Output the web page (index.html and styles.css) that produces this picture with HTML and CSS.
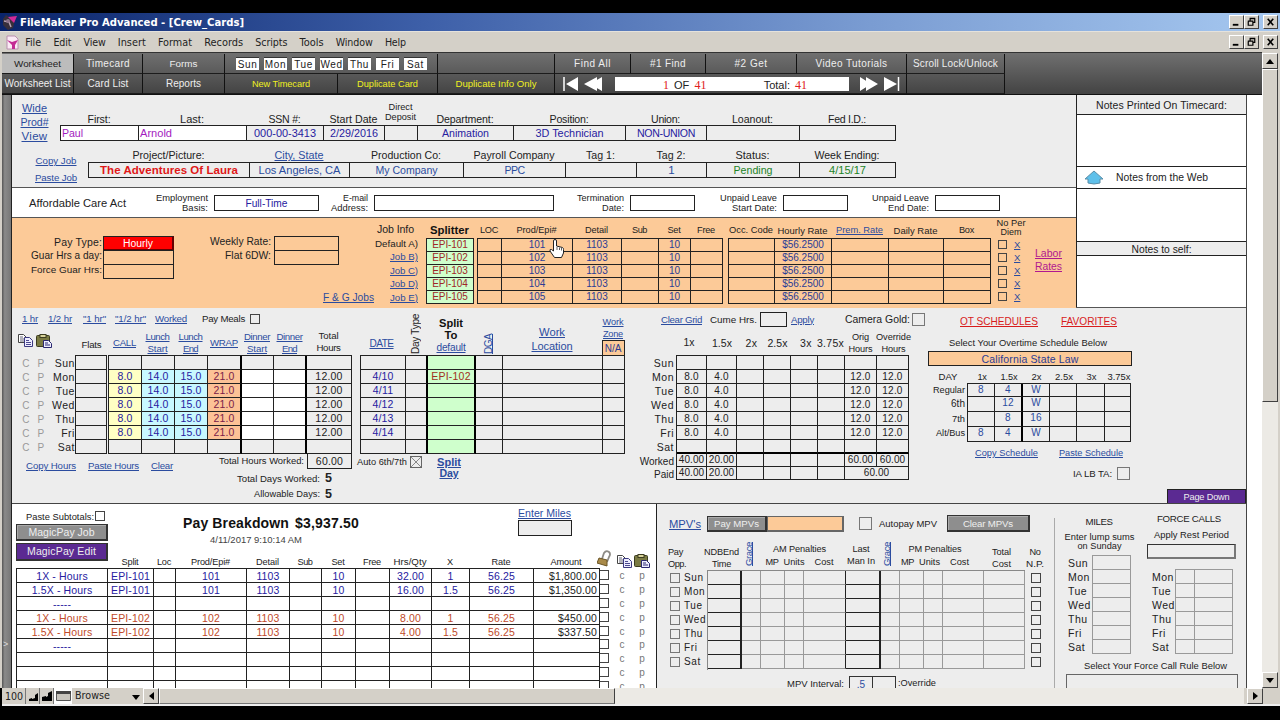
FILE: index.html
```html
<!DOCTYPE html>
<html lang="en">
<head>
<meta charset="utf-8">
<title>FileMaker Pro Advanced - [Crew_Cards]</title>
<link rel="stylesheet" href="styles.css">
</head>
<body>
<svg class="defs" width="0" height="0">
  <symbol id="copy" viewBox="0 0 15 13">
    <path d="M.5.5h5l3 3v5h-8z" fill="#fff" stroke="#444"/><path d="M2 3h3M2 5h5M2 7h5" stroke="#667"/>
    <path d="M6.500 3.500h5l3 3v6h-8z" fill="#eef" stroke="#3b3880"/><path d="M8 6.500h3M8 8.500h5M8 10.500h5" stroke="#4b4890"/>
  </symbol>
  <symbol id="paste" viewBox="0 0 16 14">
    <rect x=".5" y="1.500" width="13" height="11" rx="1" fill="#7a7a42" stroke="#3c3c20"/><rect x="4" y=".5" width="6" height="3" fill="#d8d39a" stroke="#3c3c20"/>
    <path d="M7.500 6.500h5l3 3v4h-8z" fill="#eef" stroke="#2b2870"/><path d="M9 9h3M9 11h5" stroke="#2b2870"/>
  </symbol>
  <symbol id="min" viewBox="0 0 14 12"><path d="M3 9h6" stroke="#000" stroke-width="2"/></symbol>
  <symbol id="restore" viewBox="0 0 14 12"><path d="M5.500 5V2.500h5v4H8M5 2h6M3 5h6M3.500 5.500v4h5v-4" fill="none" stroke="#000" stroke-width="1.300"/></symbol>
  <symbol id="close" viewBox="0 0 14 12"><path d="M4 2.500l6 7M10 2.500l-6 7" stroke="#000" stroke-width="1.700"/></symbol>
</svg>

<header class="titlebar">
  <svg width="17" height="17" viewBox="0 0 17 17"><path d="M2 5l3-4 3 2 7-1-3 12-5 2-5-5z" fill="#372f3b"/><path d="M7 3l9-1-3 7z" fill="#d02a9a"/><path d="M3 7l5 1 2 5" fill="none" stroke="#b9a3b4" stroke-width="1.500"/><circle cx="7" cy="7" r="2" fill="#8c7288"/></svg>
  <span data-w="224">FileMaker Pro Advanced - [Crew_Cards]</span>
  <div class="winbtns"><i><svg><use href="#min"/></svg></i><i><svg><use href="#restore"/></svg></i><i><svg><use href="#close"/></svg></i></div>
</header>
<nav class="menubar">
  <svg width="13" height="15" viewBox="0 0 13 15"><path d="M1 1h8l3 3v10H1z" fill="#fbeaf5" stroke="#b98fb0"/><path d="M1 5l5 2 6-2-3 5v4H6v-4z" fill="#c42a94"/></svg>
  <span data-w="16">File</span><span data-w="18">Edit</span><span data-w="22">View</span><span data-w="28">Insert</span><span data-w="34">Format</span><span data-w="39">Records</span><span data-w="32">Scripts</span><span data-w="24">Tools</span><span data-w="37">Window</span><span data-w="21">Help</span>
  <div class="winbtns"><i><svg><use href="#min"/></svg></i><i><svg><use href="#restore"/></svg></i><i><svg><use href="#close"/></svg></i></div>
</nav>

<div class="workspace">
<div class="document">
  <div class="toolbar">
    <div class="on"><span data-w="47">Worksheet</span></div><div><span data-w="44">Timecard</span></div><div><span data-w="28">Forms</span></div>
    <div class="days"><b>Sun</b><b>Mon</b><b>Tue</b><b>Wed</b><b>Thu</b><b>Fri</b><b>Sat</b></div>
    <div></div><div><span data-w="37">Find All</span></div><div><span data-w="36">#1 Find</span></div><div><span data-w="33">#2 Get</span></div><div><span data-w="72">Video Tutorials</span></div><div><span data-w="85">Scroll Lock/Unlock</span></div><div class="blank"></div>
    <div><span data-w="66">Worksheet List</span></div><div><span data-w="41">Card List</span></div><div><span data-w="35">Reports</span></div>
    <div class="yellow"><span data-w="58">New Timecard</span></div><div class="yellow"><span data-w="61">Duplicate Card</span></div><div class="yellow"><span data-w="81">Duplicate Info Only</span></div>
    <div class="pager">
      <svg width="42" height="16" viewBox="0 0 42 16"><path d="M1 1v14" stroke="#fff" stroke-width="1.500"/><path d="M15 1v14L3 8zM34 1v14L21 8zM39 1v14L27 8z" fill="#fff"/></svg>
      <div class="count"><span class="at"><em>1</em> OF <em>41</em></span><span>Total: <em>41</em></span></div>
      <svg width="42" height="16" viewBox="0 0 42 16"><path d="M1 1v14l11-7zM7 1v14l12-7zM25 1v14l13-7z" fill="#fff"/><path d="M39.500 1v14" stroke="#fff" stroke-width="1.500"/></svg>
    </div>
    <div></div><div class="blank"></div>
  </div>

  <div class="body">
  <div class="gutter">&gt;</div>
  <div class="sheet">
    <div class="top">
      <div class="top-left">
        <section class="person">
          <div class="side"><a data-w="25">Wide</a><a data-w="28">Prod#</a><a data-w="26">View</a></div>
          <div>
            <div class="heads cols-person"><span data-w="23">First:</span><span data-w="24">Last:</span><span data-w="32">SSN #:</span><span data-w="48">Start Date</span><div class="small"><span data-w="24">Direct</span><span data-w="31">Deposit</span></div><span data-w="57">Department:</span><span data-w="39">Position:</span><span data-w="29">Union:</span><span data-w="41">Loanout:</span><span data-w="38">Fed I.D.:</span></div>
            <div class="grid cols-person"><span class="w l pink"><q data-w="21">Paul</q></span><span class="w l pink"><q data-w="32">Arnold</q></span><span><q data-w="62">000-00-3413</q></span><span><q data-w="48">2/29/2016</q></span><span></span><span><q data-w="47">Animation</q></span><span><q data-w="68">3D Technician</q></span><span><q data-w="58">NON-UNION</q></span><span></span><span></span></div>
          </div>
        </section>
        <section class="project">
          <div class="side"><a data-w="41">Copy Job</a><a data-w="42">Paste Job</a></div>
          <div>
            <div class="heads cols-project"><span data-w="72">Project/Picture:</span><a data-w="49">City, State</a><span data-w="70">Production Co:</span><span data-w="81">Payroll Company</span><span data-w="29">Tag 1:</span><span data-w="29">Tag 2:</span><span data-w="34">Status:</span><span data-w="65">Week Ending:</span></div>
            <div class="grid cols-project"><span class="red"><q data-w="138">The Adventures Of Laura</q></span><span><q data-w="82">Los Angeles, CA</q></span><span><q data-w="62">My Company</q></span><span><q data-w="20">PPC</q></span><span></span><span>1</span><span class="green"><q data-w="39">Pending</q></span><span class="green"><q data-w="37">4/15/17</q></span></div>
          </div>
        </section>
        <section class="aca">
          <strong data-w="97">Affordable Care Act</strong>
          <div class="lbl"><span data-w="52">Employment</span><span data-w="26">Basis:</span></div><div class="field"><span data-w="42">Full-Time</span></div>
          <div class="lbl"><span data-w="25">E-mail</span><span data-w="37">Address:</span></div><div class="field"></div>
          <div class="lbl"><span data-w="47">Termination</span><span data-w="22">Date:</span></div><div class="field"></div>
          <div class="lbl"><span data-w="57">Unpaid Leave</span><span data-w="45">Start Date:</span></div><div class="field"></div>
          <div class="lbl"><span data-w="57">Unpaid Leave</span><span data-w="41">End Date:</span></div><div class="field"></div>
        </section>
        <section class="rates">
          <div class="pay-labels"><span data-w="48">Pay Type:</span><span data-w="71">Guar Hrs a day:</span><span data-w="71">Force Guar Hrs:</span></div>
          <div class="pay-fields"><div class="hot"><span data-w="30">Hourly</span></div><div></div><div></div></div>
          <div class="week-labels"><span data-w="61">Weekly Rate:</span><span data-w="46">Flat 6DW:</span></div>
          <div class="pay-fields week"><div></div><div></div></div>
          <div class="job-labels"><span class="big" data-w="37">Job Info</span><span data-w="43">Default A)</span><a data-w="28">Job B)</a><a data-w="28">Job C)</a><a data-w="28">Job D)</a><div><a data-w="51">F &amp; G Jobs</a><a data-w="28">Job E)</a></div></div>
          <div class="job-grid splitter"><div class="heads cols-split"><b data-w="39">Splitter</b></div><div class="grid cols-split" id="splitter"></div></div>
          <div class="job-grid"><div class="heads cols-job"><span data-w="18">LOC</span><span data-w="40">Prod/Epi#</span><span data-w="23">Detail</span><span data-w="15">Sub</span><span data-w="13">Set</span><span data-w="18">Free</span></div><div class="grid cols-job" id="jobs"></div></div>
          <div class="job-grid money"><div class="heads cols-rate"><span data-w="44">Occ. Code</span><span data-w="50">Hourly Rate</span><a data-w="47">Prem. Rate</a><span data-w="44">Daily Rate</span><span data-w="15">Box</span></div><div class="grid cols-rate" id="rates"></div></div>
          <div class="diem"><div class="two"><span data-w="29">No Per</span><span data-w="21">Diem</span></div><div id="diem"></div></div>
          <div class="labor"><a data-w="27">Labor</a><a data-w="27">Rates</a></div>
        </section>
      </div>
      <aside class="notes">
        <h4><span data-w="131">Notes Printed On Timecard:</span></h4><div class="note a"></div>
        <div class="web"><svg width="20" height="15" viewBox="0 0 20 15"><path d="M10 1l9 8h-3v4q-6 2-12 0V9H1z" fill="#5fc0ea" stroke="#5b8ea8"/></svg><span data-w="92">Notes from the Web</span></div><div class="note b"></div>
        <h4 class="self"><span data-w="60">Notes to self:</span></h4><div class="note c"></div>
      </aside>
    </div>

    <section class="time">
      <div class="hours">
        <div class="links"><a data-w="16">1 hr</a><a data-w="24">1/2 hr</a><a data-w="23">"1 hr"</a><a data-w="31">"1/2 hr"</a><a data-w="32">Worked</a><span data-w="43">Pay Meals</span><i class="box"></i></div>
        <div class="heads cols-hours"><div class="tools"><svg width="15" height="13"><use href="#copy"/></svg><svg width="16" height="14"><use href="#paste"/></svg></div><span data-w="20">Flats</span><a data-w="23">CALL</a><div class="two"><a data-w="24">Lunch</a><a data-w="20">Start</a></div><div class="two"><a data-w="24">Lunch</a><a data-w="15">End</a></div><a data-w="28">WRAP</a><div class="two"><a data-w="26">Dinner</a><a data-w="20">Start</a></div><div class="two"><a data-w="26">Dinner</a><a data-w="15">End</a></div><div class="two tot"><span data-w="20">Total</span><span data-w="24">Hours</span></div></div>
        <div class="rows"><div class="daycol cols-cp" id="cp"></div><div class="grid flats" id="flats"></div><div class="grid cols-punch" id="punch"></div></div>
        <div class="foot"><div class="flinks"><a data-w="50">Copy Hours</a><a data-w="51">Paste Hours</a><a data-w="22">Clear</a></div><span data-w="85">Total Hours Worked:</span><div class="sum">60.00</div></div>
        <div class="days-sum"><span data-w="83">Total Days Worked:</span><b>5</b><span data-w="66">Allowable Days:</span><b>5</b></div>
      </div>
      <div class="splits">
        <div class="heads cols-place"><a data-w="24">DATE</a><span class="vert" data-w="40">Day Type</span><div class="three"><b data-w="24">Split</b><b data-w="13">To</b><a data-w="29">default</a></div><a class="vert" data-w="20">DGA</a><div class="loc"><a data-w="26">Work</a><a data-w="41">Location</a></div><div class="zone"><a data-w="21">Work</a><a data-w="20">Zone</a><em>N/A</em></div></div>
        <div class="grid cols-place" id="place"></div>
        <div class="foot2"><span data-w="50">Auto 6th/7th</span><i class="box x"></i><div><a data-w="24">Split</a><a data-w="19">Day</a></div></div>
      </div>
      <div class="ot-hours">
        <div class="links"><a data-w="41">Clear Grid</a><span data-w="47">Cume Hrs.</span><div class="field"></div><a data-w="23">Apply</a><span class="gold" data-w="65">Camera Gold:</span><i class="box"></i></div>
        <div class="heads cols-ot"><span></span><span data-w="11">1x</span><span data-w="20">1.5x</span><span data-w="12">2x</span><span data-w="20">2.5x</span><span data-w="12">3x</span><span data-w="27">3.75x</span><div class="two"><span data-w="17">Orig</span><span data-w="24">Hours</span></div><div class="two"><span data-w="35">Override</span><span data-w="24">Hours</span></div></div>
        <div class="rows"><div class="daycol names" id="otdays"></div><div class="grid cols-otgrid" id="ot"></div></div>
      </div>
      <div class="schedules">
        <div class="sched-links"><a data-w="78">OT SCHEDULES</a><a data-w="56">FAVORITES</a></div>
        <div class="pick"><span data-w="158">Select Your Overtime Schedule Below</span></div>
        <div class="law"><span data-w="97">California State Law</span></div>
        <div class="heads cols-law"><span data-w="19">DAY</span><span data-w="9">1x</span><span data-w="17">1.5x</span><span data-w="10">2x</span><span data-w="18">2.5x</span><span data-w="10">3x</span><span data-w="23">3.75x</span></div>
        <div class="rows"><div class="lawnames"><span data-w="32">Regular</span><span data-w="14">6th</span><span data-w="13">7th</span><span data-w="29">Alt/Bus</span></div><div class="grid cols-lawgrid" id="law"></div></div>
        <div class="law-links"><a data-w="63">Copy Schedule</a><a data-w="64">Paste Schedule</a></div>
        <div class="ialb"><span data-w="39">IA LB TA:</span><i class="box"></i></div>
        <div class="pagedown"><span data-w="46">Page Down</span></div>
      </div>
    </section>

    <div class="bottom">
      <section class="pay">
        <div class="pay-top">
          <div class="actions"><div class="sub"><span data-w="68">Paste Subtotals:</span><i class="box"></i></div><button><span data-w="66">MagicPay Job</span></button><button class="purple"><span data-w="69">MagicPay Edit</span></button></div>
          <div class="title"><h2><span data-w="106">Pay Breakdown</span><span data-w="64">$3,937.50</span></h2><time data-w="92">4/11/2017 9:10:14 AM</time></div>
          <div class="miles"><a data-w="53">Enter Miles</a><div class="field"></div></div>
        </div>
        <div class="heads cols-pay"><span></span><span data-w="17">Split</span><span data-w="14">Loc</span><span data-w="39">Prod/Epi#</span><span data-w="23">Detail</span><span data-w="15">Sub</span><span data-w="13">Set</span><span data-w="18">Free</span><span data-w="33">Hrs/Qty</span><span data-w="6">X</span><span data-w="19">Rate</span><span data-w="31">Amount</span>
          <svg width="14" height="17" viewBox="0 0 14 17"><path d="M5 9L7 3Q9 0 12 2q2 2 0 5l-2 5" fill="none" stroke="#8d8b86" stroke-width="1.800"/><path d="M2 8l8 2v6L0 13z" fill="#a98a48" stroke="#6b5526"/></svg>
          <svg width="15" height="13"><use href="#copy"/></svg><svg width="16" height="14"><use href="#paste"/></svg></div>
        <div class="rows"><div class="grid cols-pay" id="pay"></div><div class="paychecks" id="paychecks"></div></div>
      </section>
      <section class="mpv">
        <div class="mpv-top"><a data-w="32">MPV's</a><button><span data-w="45">Pay MPVs</span></button><div class="orange"></div><i class="box"></i><span data-w="58">Autopay MPV</span><button class="clear"><span data-w="50">Clear MPVs</span></button></div>
        <div class="heads cols-mpvhead"><div class="two l"><span data-w="15">Pay</span><span data-w="18">Opp.</span></div><div class="two"><span data-w="35">NDBEnd</span><span data-w="19">Time</span></div><a class="vert" data-w="24">Grace</a><div class="pen"><span data-w="53">AM Penalties</span><div><span data-w="13">MP</span><span data-w="21">Units</span><span data-w="19">Cost</span></div></div><div class="two last"><span data-w="17">Last</span><span data-w="28">Man In</span></div><a class="vert" data-w="24">Grace</a><div class="pen"><span data-w="53">PM Penalties</span><div><span data-w="13">MP</span><span data-w="21">Units</span><span data-w="19">Cost</span></div></div><div class="two"><span data-w="19">Total</span><span data-w="19">Cost</span></div><div class="two"><span data-w="11">No</span><span data-w="18">N.P.</span></div></div>
        <div class="rows"><div class="opp" id="opp"></div><div class="grid cols-mpv" id="mpv"></div><div class="nonp" id="nonp"></div></div>
        <div class="interval"><span data-w="57">MPV Interval:</span><div>.5</div><div></div><span data-w="38">:Override</span></div>
      </section>
      <section class="extras">
        <div class="ex-miles"><h5><span data-w="27">MILES</span></h5><div class="two"><span data-w="70">Enter lump sums</span><span data-w="44">on Sunday</span></div><div class="rows"><div class="daycol names" id="mdays"></div><div class="grid pale cols-m" id="mgrid"></div></div></div>
        <div class="ex-force"><h5><span data-w="64">FORCE CALLS</span></h5><p><span data-w="75">Apply Rest Period</span></p><div class="rest"></div><div class="rows"><div class="daycol names" id="fdays"></div><div class="grid pale cols-f" id="fgrid"></div></div></div>
        <div class="rule"><span data-w="143">Select Your Force Call Rule Below</span><div></div></div>
      </section>
    </div>
  </div>
  </div>
</div>
<div class="vscroll"><i class="up"><svg width="8" height="5"><path d="M0 5h8L4 0z"/></svg></i><div class="thumb"></div><i class="down"><svg width="8" height="5"><path d="M0 0h8L4 5z"/></svg></i></div>
</div>

<footer class="status">
  <span class="zoom" data-w="18">100</span>
  <i class="z"><svg width="10" height="8"><path d="M0 8v-2l3-1v1l3-1V2l3-2v8z"/></svg></i><i class="z"><svg width="11" height="10"><path d="M0 10V6l4-1v1l2-1V2l4-2v10z"/></svg></i><i class="z w"><svg width="15" height="10"><path d="M.5.500h14v9H.5z" fill="#c8c5be" stroke="#555"/><path d="M0 1.500h15" stroke="#444" stroke-width="3"/></svg></i>
  <span class="mode" data-w="35">Browse</span><svg class="drop" width="8" height="5"><path d="M0 0h8L4 5z"/></svg>
  <i class="arrow"><svg width="5" height="8"><path d="M5 0v8L0 4z"/></svg></i><div class="hthumb"></div><div class="htrack"></div><i class="arrow r"><svg width="5" height="8"><path d="M0 0v8l5-4z"/></svg></i><div class="corner"></div>
</footer>

<svg class="hand" width="15" height="19" viewBox="0 0 15 19"><path d="M4.500 12V2q0-1.500 1.500-1.500T7.500 2v5l6 1.500q1 .5 1 2V14l-2 4.500h-7L1 12q-.5-2 1.500-1.500z" fill="#fff" stroke="#222"/><path d="M8 8v3M10.500 8.500V11M12.500 9v2.500" stroke="#333" stroke-width=".8"/></svg>
<script src="app.js"></script>
</body>
</html>
```

FILE: app.js
```js
const DAYS = ['Sun', 'Mon', 'Tue', 'Wed', 'Thu', 'Fri', 'Sat'];
const worked = r => r > 0 && r < 6;

// Adds one cell per value; classOf(row, col) names the cell's extra classes.
function fill(id, rows, classOf = () => '') {
  const el = document.getElementById(id);
  rows.forEach((row, r) => row.forEach((text, c) => {
    const cell = document.createElement('span');
    cell.className = classOf(r, c);
    if (text === '[]') {
      const box = document.createElement('i');
      box.className = 'box';
      cell.append(box);
    } else {
      cell.textContent = text;
    }
    el.append(cell);
  }));
}
const blank = (rows, cols) => Array.from({ length: rows }, () => Array(cols).fill(''));

const jobs = ['101', '102', '103', '104', '105'];
fill('splitter', jobs.map(j => ['EPI-' + j]));
fill('jobs', jobs.map(j => ['', j, '1103', '', '10', '']));
fill('rates', jobs.map(() => ['', '$56.2500', '', '', '']));
fill('diem', jobs.map(() => ['[]', 'X']), (r, c) => (c ? 'link' : ''));

fill('cp', DAYS.map(d => ['C', 'P', d]), (r, c) => (c < 2 ? 'faint' : 'name'));
fill('flats', blank(7, 1));
const tint = ['yellow', 'cyan', 'cyan', 'peach', 'white', 'white', 'plain'];
fill('punch', DAYS.map((d, r) => worked(r) ? ['8.0', '14.0', '15.0', '21.0', '', '', '12.00'] : Array(7).fill('')),
  (r, c) => (worked(r) ? tint[c] : '') + (c === 3 || c === 5 ? ' thick' : ''));
fill('place', DAYS.map((d, r) => [worked(r) ? '4/' + (9 + r) : '', '', r === 1 ? 'EPI-102' : '', '', '', '']),
  (r, c) => (c === 2 ? 'mint' : c === 1 ? 'thick' : ''));
fill('otdays', [...DAYS, 'Worked', 'Paid'].map(d => [d]));
fill('ot', [
  ...DAYS.map((d, r) => worked(r) ? ['8.0', '4.0', '', '', '', '', '12.0', '12.0'] : Array(8).fill('')),
  ['40.00', '20.00', '', '', '', '', '60.00', '60.00'],
  ['40.00', '20.00', '', '', '', '', '60.00'],
], (r, c) => (r > 6 ? 'total' : '') + (r === 6 ? ' under' : '') + (r === 8 && c === 6 ? ' wide' : ''));
fill('law', [['8', '4', 'W', '', '', ''], ['', '12', 'W', '', '', ''], ['', '8', '16', '', '', ''], ['8', '4', 'W', '', '', '']],
  (r, c) => (c === 1 ? 'thick' : ''));

const line = (kind, job, qty, x, amount) => [kind, 'EPI-' + job, '', job, '1103', '', '10', '', qty, x, '56.25', amount];
const rule = ['-----', ...Array(11).fill('')];
fill('pay', [
  line('1X - Hours', '101', '32.00', '1', '$1,800.00'),
  line('1.5X - Hours', '101', '16.00', '1.5', '$1,350.00'),
  rule,
  line('1X - Hours', '102', '8.00', '1', '$450.00'),
  line('1.5X - Hours', '102', '4.00', '1.5', '$337.50'),
  rule,
  ...blank(3, 12),
], (r, c) => (c === 11 ? 'amount' : r === 3 || r === 4 ? 'rust' : ''));
fill('paychecks', Array.from({ length: 9 }, () => ['[]', 'c', 'p']));

fill('opp', DAYS.map(d => ['[]', d]));
fill('mpv', blank(7, 10), (r, c) => (c === 0 || c === 5 ? 'dark' : c === 4 ? 'edge' : ''));
fill('nonp', DAYS.map(() => ['[]']));
fill('mdays', DAYS.map(d => [d]));
fill('mgrid', blank(7, 1));
fill('fdays', DAYS.slice(1).map(d => [d]));
fill('fgrid', blank(6, 2));

// Fits each label to the width of its text object: a small reduction in size
// where the text is too long, then tracking for the rest.
document.querySelectorAll('[data-w]').forEach(el => {
  const measure = () => {
    const range = document.createRange();
    range.selectNodeContents(el);
    const rect = range.getBoundingClientRect();
    return el.classList.contains('vert') ? rect.height : rect.width;
  };
  const target = Number(el.dataset.w);
  if (measure() > target) {
    const size = parseFloat(getComputedStyle(el).fontSize);
    el.style.fontSize = size * Math.max(target / measure(), 0.92) + 'px';
  }
  el.style.letterSpacing = (target - measure()) / el.textContent.length + 'px';
});
```

FILE: styles.css
```css
* { box-sizing: border-box; }
body { margin: 0; width: 1280px; height: 720px; overflow: hidden; background: #000; padding-top: 13px; font: 10.5px/14px "Liberation Sans", Arial, sans-serif; color: #222; position: relative; }
.defs { display: block; height: 0; }
span, a, b, strong, time, q { white-space: nowrap; }
q { quotes: none; }
a { color: #2b4c9f; text-decoration: underline; text-underline-offset: 1px; }
em, i { font-style: normal; }
svg { display: block; flex: none; }
.box { display: block; flex: none; width: 10px; height: 10px; border: 1px solid #444; }

.titlebar { height: 18px; display: flex; align-items: center; gap: 2px; padding-left: 1px; background: linear-gradient(90deg, #0a246a, #3d5fa8 33%, #7a9cd2 68%, #a6c8f0); color: #fff; font: bold 11.5px/17px "DejaVu Sans Condensed", "DejaVu Sans", sans-serif; }
.menubar { height: 21px; display: flex; align-items: center; gap: 12.200px; padding-left: 6px; background: #d4d0c8; border-top: 1px solid #e5e2dc; font: 11.500px/19px "DejaVu Sans Condensed", "DejaVu Sans", sans-serif; }
.menubar > svg { margin-right: -6px; }
.winbtns { margin-left: auto; display: flex; padding-right: 2px; }
.winbtns i { width: 15px; height: 14px; background: #d4d0c8; border: 1px solid #fff; border-right-color: #404040; border-bottom-color: #404040; }
.winbtns i:last-child { margin-left: 4px; }
.winbtns svg { width: 13px; height: 12px; }

.workspace { display: flex; height: 636px; padding-left: 2px; background: #d4d0c8; }
.document { width: 1260px; height: 636px; overflow: hidden; }
.toolbar { display: grid; height: 43px; grid-template-columns: 72px 69px 82px 113px 100px 117px 76px 75px 91px 110px 98px 1fr; grid-template-rows: 20px 20px; padding-top: 1px; border-top: 1px solid #333; border-bottom: 1px solid #111; background: linear-gradient(#707070, #434343); color: #eee; font-size: 10px; }
.toolbar > div { border-right: 1px solid #111; border-bottom: 1px solid #1c1c1c; display: flex; align-items: center; justify-content: center; }
.toolbar > .on { background: #bcbcbc; color: #222; }
.toolbar > .blank { border: 0; }
.toolbar > .yellow { color: #f0f020; }
.toolbar > .days { grid-column: span 2; gap: 5px; padding-left: 1px; }
.days b { width: 23px; height: 12px; background: #fff; color: #222; font: 10px/13px "Liberation Sans", sans-serif; letter-spacing: .6px; text-align: center; box-shadow: 0 -1px #333; }
.toolbar > .pager { grid-column: span 4; justify-content: flex-start; padding-left: 8px; gap: 10px; }
.count { width: 234px; height: 14px; background: #fff; color: #222; display: flex; justify-content: space-between; padding: 1px 42px 0 48px; font-size: 11px; word-spacing: 2px; }
.count em { color: #e02020; font-family: "Liberation Serif", serif; font-size: 12px; }
.body { display: flex; height: 593px; background: #fff; }
.gutter { width: 10px; background: linear-gradient(90deg, #555, #8a8a8a 30%, #777); border-right: 1px solid #222; color: #ddd; font-size: 9px; padding: 542px 0 0 1px; }
.sheet { width: 1235px; background: #ededed; border-right: 1px solid #444; }

.top { display: flex; height: 213px; border-bottom: 1px solid #555; }
.top-left { width: 1065px; border-right: 1px solid #222; }
.heads { display: grid; justify-items: center; align-items: end; }
.grid { display: grid; border: 1px solid #222; border-width: 1px 0 0 1px; color: #2620a0; width: max-content; }
.grid > span { border: 1px solid #222; border-width: 0 1px 1px 0; text-align: center; overflow: hidden; }
.rows { display: flex; }
.cols-person { grid-template-columns: 78px 108px 77px 61px 33px 96px 112px 81px 93px 96px; }
.cols-project { grid-template-columns: 161px 100px 114px 102px 71px 70px 93px 96px; }
.person, .project { display: flex; }
.person { height: 50px; }
.project { height: 42px; }
.person .heads { height: 30px; font-size: 11.500px; line-height: 12px; }
.project .heads { height: 17px; font-size: 11.500px; line-height: 13px; }
.person .grid, .project .grid { grid-auto-rows: 15px; line-height: 14px; font-size: 11.500px; }
.project .grid { color: #2b4c9f; }
.person .small { font-size: 9.500px; line-height: 10px; padding-bottom: 3px; display: grid; justify-items: center; }
.side { display: flex; flex-direction: column; align-items: center; font-size: 11.500px; }
.person .side { width: 48px; padding: 6px 3px 0 0; }
.project .side { width: 76px; padding: 7px 0 0 12px; font-size: 10.500px; line-height: 17px; }
.w { background: #fff; }
.grid > .l { text-align: left; padding-left: 1px; }
.grid > .pink { color: #a31bc0; }
.grid > .red { color: #e01818; font-weight: bold; }
.grid > .green { color: #1c8426; }
.aca { height: 31px; border: 1px solid #555; border-width: 1px 0; background: #fff; display: grid; grid-template-columns: 142px 60px 105px 55px 180px 76px 65px 88px 65px 87px 65px; align-items: center; }
.aca strong { font-size: 11.500px; font-weight: normal; padding-left: 17px; justify-self: start; }
.lbl { display: flex; flex-direction: column; align-items: flex-end; font-size: 9.500px; line-height: 10px; padding-right: 6px; }
.field { border: 1px solid #222; height: 16px; text-align: center; line-height: 15px; }
.aca .field { color: #2620a0; font-size: 11px; }

.rates { display: flex; height: 90px; background: #fcca98; }
.pay-labels, .week-labels { display: flex; flex-direction: column; align-items: flex-end; padding-top: 17px; font-size: 10.500px; }
.pay-labels { width: 91px; padding-right: 1px; }
.pay-fields { width: 71px; padding-top: 19px; }
.pay-fields div { height: 15px; margin-top: -1px; border: 1px solid #222; text-align: center; line-height: 13px; }
.pay-fields .hot { background: #f00; color: #fff; border-bottom: 2px solid #600; border-right: 2px solid #600; }
.week-labels { width: 100px; padding-right: 3px; }
.pay-fields.week { width: 65px; }
.job-labels { display: flex; flex-direction: column; align-items: flex-end; width: 79px; padding-top: 5px; line-height: 13.500px; }
.job-labels .big { font-size: 11.500px; margin-right: 4px; }
.job-labels div { display: flex; width: 79px; justify-content: flex-end; gap: 16px; }
.job-grid { margin-left: 5px; font-size: 10px; }
.job-grid.splitter { margin-left: 8px; }
.job-grid.splitter + .job-grid { margin-left: 3px; }
.job-grid .heads { height: 20px; line-height: 15px; font-size: 10px; }
.job-grid b { font-size: 12px; color: #111; }
.job-grid .grid { grid-auto-rows: 13px; line-height: 12px; }
.cols-split { grid-template-columns: 47px; }
.cols-job { grid-template-columns: 24px 71px 49px 37px 32px 32px; }
.cols-rate { grid-template-columns: 46px 57px 57px 55px 47px; }
.job-grid .grid { color: #2b3c95; }
.job-grid #splitter { background: #cfffcc; color: #a02828; letter-spacing: -.1px; }
.diem { width: 34px; margin-left: 3px; font-size: 9.500px; }
.two { display: flex; flex-direction: column; align-items: center; }
.diem .two { line-height: 9px; padding-top: 1px; }
.diem .two span { line-height: 9px; }
#diem { display: grid; grid-template-columns: 16px 12px; grid-auto-rows: 13px; line-height: 12px; margin: 2px 0 0 4px; }
.diem .box { margin-top: 1px; width: 9px; height: 9px; }
.link { color: #2b4c9f; text-decoration: underline; }
.labor { padding: 29px 0 0 7px; display: flex; flex-direction: column; line-height: 13px; }
.labor a { color: #b01890; }
.notes { width: 169px; background: #fff; font-size: 10.500px; }
.notes h4 { margin: 0; height: 20px; font-weight: normal; background: #ededed; border-bottom: 1px solid #222; text-align: center; line-height: 20px; }
.note { border-bottom: 1px solid #222; }
.note.a { height: 52px; }
.web { height: 22px; display: flex; align-items: center; gap: 12px; padding-left: 7px; border-bottom: 1px solid #222; }
.note.b { height: 53px; }
.notes .self { height: 14px; line-height: 14px; }
.note.c { border: 0; }

.time { display: flex; height: 196px; border-bottom: 1px solid #444; }
.hours { width: 348px; }
.hours .links { display: grid; grid-template-columns: 26px 35px 32px 40px 47px 48px 12px; align-items: center; height: 21px; padding-left: 10px; font-size: 10.500px; }
.hours .heads { height: 26px; grid-template-columns: 63px 33px 33px 33px 33px 34px 32px 33px 45px; line-height: 12px; font-size: 10.500px; }
.hours .heads > a { margin-bottom: 6px; }
.hours .heads > span { margin-bottom: 4px; }
.hours .tot { margin-bottom: 1px; }
.tools { display: flex; gap: 3px; justify-self: start; padding: 0 0 7px 6px; }
.daycol { display: grid; grid-auto-rows: 14px; align-content: start; line-height: 15px; padding-top: 1px; letter-spacing: .5px; }
.cols-cp { width: 63px; grid-template-columns: 8px 22px 1fr; padding-left: 10px; padding-right: 1px; text-align: right; }
.daycol > .faint { color: #999; text-align: center; font-size: 10px; }
.time .grid { grid-auto-rows: 14px; line-height: 13px; letter-spacing: .2px; }
.flats { width: 32px; margin-right: 1px; }
.grid.flats { grid-template-columns: 31px; border-right: 0; }
.cols-punch { grid-template-columns: 33px 33px 33px 34px 32px 33px 45px; }
.grid > .yellow { background: #ffffc4; }
.grid > .cyan { background: #c8f8ff; }
.grid > .peach { background: #fcc296; color: #7a2048; }
.grid > .white { background: #fff; }
.grid > .plain { color: #222; }
.grid > .thick { border-right-width: 2px; border-right-color: #000; }
.foot { display: flex; height: 18px; }
.flinks { width: 207px; display: flex; gap: 12px; padding: 5px 0 0 14px; }
.foot > span { font-size: 10px; }
.sum { margin-left: 3px; width: 45px; height: 15px; border: 1px solid #222; border-top: 0; text-align: center; line-height: 14px; letter-spacing: .2px; }
.days-sum { display: grid; grid-template-columns: 308px 12px; justify-items: end; grid-auto-rows: 16px; line-height: 13px; font-size: 10px; }
.days-sum b { font-size: 12.500px; }

.splits { width: 277px; }
.splits .heads { height: 47px; line-height: 12px; font-size: 11px; }
.cols-place { grid-template-columns: 45px 22px 48px 27px 100px 22px; }
.splits .heads > a:first-child { margin-bottom: 5px; margin-right: 2px; }
.vert { writing-mode: vertical-rl; transform: rotate(180deg); line-height: 12px; margin-bottom: 1px; }
a.vert { text-underline-offset: -2px; }
.three, .loc, .zone { display: flex; flex-direction: column; align-items: center; line-height: 12px; }
.three b { font-size: 11.500px; line-height: 12px; color: #111; }
.three a { line-height: 14px; }
.loc { line-height: 14px; padding-bottom: 2px; font-size: 12px; }
.zone { font-size: 10px; }
.zone em { width: 23px; height: 15px; background: #fcca98; border: 1px solid #222; border-bottom: 0; text-align: center; color: #2b3c95; line-height: 15px; }
#place > .mint { background: #cfffcc; color: #a03020; border-right: 2px solid #000; }
.foot2 { display: flex; font-size: 10px; line-height: 16px; }
.foot2 > .box { margin: 2px 15px 0 3px; width: 12px; height: 12px; border-color: #666; }
.box.x { background: linear-gradient(45deg, transparent 46%, #888 46%, #888 54%, transparent 54%), linear-gradient(-45deg, transparent 46%, #888 46%, #888 54%, transparent 54%); }
.foot2 > span { margin-left: -3px; }
.foot2 div { display: flex; flex-direction: column; align-items: center; font: bold 11.500px/11px "Liberation Sans", sans-serif; padding-top: 3px; }

.ot-hours { width: 288px; }
.ot-hours .links { display: flex; height: 23px; align-items: center; padding-left: 24px; font-size: 10.500px; }
.ot-hours .links span { margin-left: 8px; }
.ot-hours .links .field { width: 28px; margin: 0 4px 0 3px; height: 15px; }
.ot-hours .links .gold { margin-left: 31px; }
.ot-hours .links .box { margin-left: 2px; width: 13px; height: 13px; border-color: #777; }
.cols-ot { grid-template-columns: 40px 24px 42px 17px 35px 22px 27px 33px 33px; font-size: 10.500px; height: 24px; line-height: 12px; }
.ot-hours .cols-ot > span { margin-bottom: 6px; }
.ot-hours .two { margin-bottom: 0; font-size: 10px; }
.cols-otgrid { grid-template-columns: 30px 30px 27px 27px 27px 27px 32px 32px; }
#otdays { width: 39px; padding-right: 2px; text-align: right; grid-template-rows: repeat(7, 14px) 13px 12px; justify-content: end; }
#otdays > :nth-child(n+8) { letter-spacing: 0; font-size: 10px; }
#ot { color: #222; grid-template-rows: repeat(7, 14px) 13px 13px; font-size: 10px; }
#ot > .total { line-height: 12px; letter-spacing: .1px; }
#ot > .under { border-bottom: 2px solid #000; }
#ot > .wide { grid-column: span 2; }

.schedules { width: 309px; display: flex; flex-direction: column; align-items: flex-start; }
.sched-links { display: flex; gap: 23px; padding: 7px 0 0 35px; font-size: 11px; }
.sched-links a { color: #d81c1c; }
.pick { padding: 7px 0 0 24px; font-size: 10px; }
.law { margin: 1px 0 0 3px; width: 204px; height: 15px; border: 1px solid #222; background: #fcca98; color: #2b3c95; text-align: center; line-height: 14px; font-size: 10.500px; }
.cols-law { grid-template-columns: 42px 26px 28px 27px 28px 27px 28px; margin: 4px 0 0 2px; height: 14px; line-height: 12px; font-size: 10px; }
.lawnames { width: 42px; display: grid; grid-template-rows: 14px 15px 14px 15px; justify-items: end; padding-right: 2px; font-size: 10px; }
.cols-lawgrid { grid-template-columns: 27px 28px 27px 27px 28px 26px; }
#law { grid-template-rows: 13px 15px 15px 15px; color: #2b4c9f; font-size: 10px; line-height: 12px; }
.law-links { display: flex; gap: 21px; padding: 4px 0 0 50px; font-size: 10px; }
.ialb { display: flex; gap: 5px; padding: 7px 0 0 148px; font-size: 10.500px; }
.ialb .box { width: 13px; height: 13px; border-color: #777; }
.pagedown { margin: 8px 0 0 242px; width: 79px; height: 14px; background: #5b2a92; border: 1px solid #222; border-bottom: 0; color: #eee; text-align: center; line-height: 14px; font-size: 10px; flex: none; }

.bottom { display: flex; height: 184px; overflow: hidden; }
.pay { width: 645px; background: #fff; border-right: 1px solid #222; padding-left: 4px; font-size: 10px; }
.pay-top { display: flex; height: 46px; }
.actions { width: 92px; display: flex; flex-direction: column; flex: none; }
.sub { display: flex; height: 28px; padding: 6px 0 0 10px; gap: 1px; }
.sub .box { margin-top: 1px; }
button { font: 10.500px/13px "Liberation Sans", sans-serif; color: #eee; background: #8e8e8e; border: 1px solid #333; border-right: 2px solid #333; border-bottom: 2px solid #333; padding: 0; height: 17px; flex: none; box-shadow: inset 1px 1px #aaa; }
button.purple { margin-top: 2px; background: #5b2a92; box-shadow: none; height: 18px; }
.title { margin-left: 75px; width: 176px; padding-top: 11px; }
.title h2 { margin: 0; display: flex; gap: 6px; font-size: 14px; line-height: 16px; color: #111; }
.title time { display: block; margin: 2px 0 0 27px; color: #444; width: 92px; }
.miles { margin-left: 159px; padding-top: 2px; font-size: 11px; line-height: 14px; }
.miles .field { width: 54px; background: #ededed; }
.pay > .heads { height: 18px; line-height: 12px; }
.pay > .heads > svg { justify-self: start; margin-left: 4px; }
.pay > .heads > svg:nth-last-child(3) { margin-left: -2px; margin-bottom: 1px; }
.pay > .heads { grid-template-columns: 91px 46px 22px 71px 43px 32px 34px 34px 42px 38px 64px 66px 14px 17px 19px; }
#pay { grid-template-columns: 91px 46px 22px 71px 43px 32px 34px 34px 42px 38px 64px 66px; grid-auto-rows: 14px; line-height: 14px; letter-spacing: .15px; font-size: 10.500px; }
#pay > .amount { text-align: right; color: #222; padding-right: 2px; }
#pay > .rust { color: #c04a2a; }
.paychecks { display: grid; grid-template-columns: 17px 10px 30px; grid-auto-rows: 13.900px; padding-top: 1px; color: #777; text-align: center; line-height: 13px; }
.paychecks .box { margin-top: 1px; border-left: 0; width: 9px; }

.mpv { width: 399px; font-size: 10px; border-right: 1px solid #aaa; margin-top: 14px; }
.mpv-top { display: flex; align-items: center; height: 21px; padding-left: 12px; margin-top: -5px; }
.mpv-top a { font-size: 12px; }
.mpv-top button { width: 60px; height: 16px; margin-left: 6px; }
.mpv-top button.clear { width: 83px; height: 17px; margin-left: 10px; }
.mpv-top .orange { width: 77px; height: 16px; background: #fcca98; border: 1px solid #666; border-right-width: 2px; border-bottom-width: 2px; }
.mpv-top .box { width: 13px; height: 13px; border-color: #777; margin: 0 7px 0 15px; }
.cols-mpvhead { grid-template-columns: 36px 35px 19px 83px 40px 12px 84px 49px 18px; margin-left: 11px; height: 36px; line-height: 12px; }
.cols-mpvhead .two.l { align-items: flex-start; justify-self: start; }
.cols-mpvhead > .last { padding-bottom: 3px; }
.cols-mpvhead .vert { font-size: 10.500px; margin-bottom: 4px; }
.pen { display: flex; flex-direction: column; align-items: center; line-height: 13px; padding-bottom: 1px; }
.pen div { display: flex; gap: 5px; }
.pen div span:last-child { margin-left: 5px; }
.opp { width: 50px; display: grid; grid-template-columns: 14px 1fr; grid-auto-rows: 14px; padding: 1px 0 0 13px; letter-spacing: .6px; font-size: 10px; }
.opp .box { margin-top: 2px; border-color: #777; }
#mpv { grid-template-columns: 34px 19px 24px 19px 42px 35px 19px 24px 19px 82px; grid-template-columns: 34px 19px 24px 19px 42px 35px 19px 24px 19px 41px 41px; grid-auto-rows: 14px; border-color: #888; }
#mpv { grid-template-columns: 34px 19px 24px 19px 42px 35px 19px 24px 19px 82px; }
#mpv > span { border-color: #999; }
#mpv > .dark { border-color: #222; border-right-width: 2px; }
#mpv > .edge { border-right-color: #222; }
#mpv > :nth-child(10n) { background: linear-gradient(#999, #999) 40px 0 / 1px 100% no-repeat; }
.nonp { display: grid; grid-auto-rows: 14px; padding: 2px 0 0 6px; }
.nonp .box { margin-top: 1px; }
.interval { display: flex; padding: 6px 0 0 130px; line-height: 15px; }
.interval div { width: 24px; height: 20px; border: 1px solid #333; text-align: center; margin-right: -1px; color: #2b4c9f; }
.interval span:first-child { margin-right: 5px; }
.interval span:last-child { margin-left: 3px; }

.extras { width: 191px; display: grid; grid-template-columns: 95px 96px; grid-template-rows: 150px 34px; font-size: 10.500px; flex: none; }
.extras h5 { margin: 0; font-weight: normal; font-size: 10.500px; line-height: 14px; text-align: center; }
.ex-miles { padding-top: 10px; }
.ex-miles h5 { padding-right: 7px; }
.ex-miles .two { line-height: 9px; padding: 4px 6px 0 0; height: 26px; font-size: 9.500px; }
.ex-miles .daycol { width: 37px; padding-left: 13px; }
.ex-force { padding-top: 7px; }
.ex-force h5 { padding-right: 18px; }
.ex-force p { margin: 2px 13px 0 0; text-align: center; font-size: 10px; }
.rest { margin: 2px 0 0 -3px; width: 89px; height: 15px; border: 1px solid #333; border-right: 2px solid #777; border-bottom: 2px solid #777; }
.ex-force .rows { margin-top: 10px; }
.ex-force .daycol { width: 25px; padding-left: 2px; }
.pale { grid-auto-rows: 14px; border-color: #999; }
.pale > span { border-color: #999; }
.cols-m { grid-template-columns: 38px; }
.cols-f { grid-template-columns: 19px 38px; }
.rule { grid-column: 1 / 3; padding: 5px 0 0 10px; text-align: center; font-size: 10px; }
.rule div { margin: 1px 0 0 1px; width: 172px; height: 30px; border: 1px solid #666; }

.vscroll { width: 16px; background: #eceae5; display: flex; flex-direction: column; margin-top: 1px; }
.vscroll i, .arrow { display: flex; align-items: center; justify-content: center; background: #d4d0c8; border: 1px solid #fff; border-right-color: #404040; border-bottom-color: #404040; flex: none; }
.up, .down { height: 16px; }
.thumb { height: 333px; background: #d4d0c8; border: 1px solid #fff; border-right-color: #404040; border-bottom-color: #404040; }
.down { margin-top: auto; }
.status { height: 18px; margin-left: 2px; background: #d4d0c8; border-bottom: 2px solid #eee; display: flex; font: 11.500px/16px "DejaVu Sans Condensed", sans-serif; }
.status .zoom { width: 23px; padding-left: 3px; }
.z { width: 14px; display: flex; align-items: flex-end; justify-content: flex-end; padding-bottom: 3px; border-left: 1px solid #777; }
.z.w { width: 19px; justify-content: center; }
.mode { margin-left: 3px; }
.status > .drop { margin: 7px 0 0 22px; }
.arrow { width: 16px; height: 16px; margin-left: 3px; }
.hthumb { width: 456px; background: #d4d0c8; border: 1px solid #fff; border-right-color: #404040; border-bottom-color: #777; }
.htrack { flex: 1; background: #eceae5; }
.corner { width: 17px; }
.hand { position: absolute; left: 549px; top: 239px; }
```
